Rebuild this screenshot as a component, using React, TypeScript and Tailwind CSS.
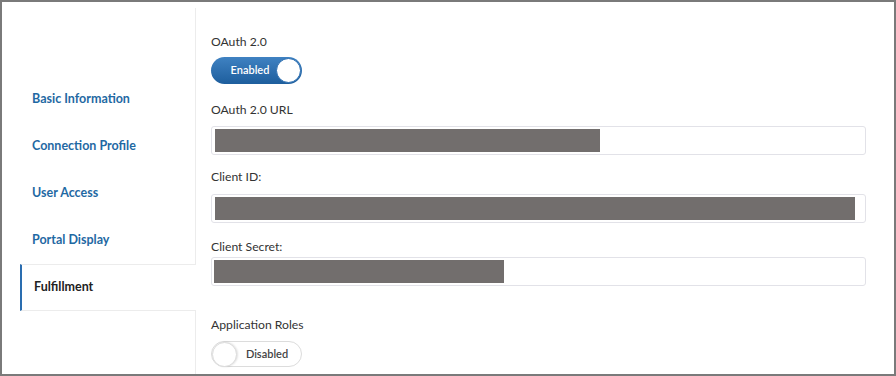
const navItems = [
    "Basic Information",
    "Connection Profile",
    "User Access",
    "Portal Display",
    "Fulfillment",
];

const Field = ({ label, fill, className }: { label: string; fill: number; className: string }) => (
    <div className={className}>
        <div className="text-[12.2px] leading-4 text-[#333]">{label}</div>
        <div className="mt-[8px] h-[29px] rounded-[3px] border border-[#e2e2e8] bg-white p-[2px] pl-[3px]">
            <div className="h-full bg-[#726e6d]" style={{ width: fill }} />
        </div>
    </div>
);

const App = () => {
    return (
        <div className="flex h-[376px] w-[896px] overflow-hidden border-2 border-[#7a7a7a] bg-white font-['Lato',sans-serif]">
            <aside className="w-[194px] shrink-0 pt-[6px]">
                <ul className="h-full border-r border-[#ececec] pl-[18px] pt-[68px]">
                    {navItems.map((item) =>
                        item === "Fulfillment" ? (
                            <li
                                key={item}
                                className="relative -mr-px flex h-[47px] items-center border-y border-l-2 border-y-[#ececec] border-l-[#2a6db0] bg-white pl-[12px] text-[12.5px] font-bold text-[#222]"
                            >
                                {item}
                            </li>
                        ) : (
                            <li key={item} className="flex h-[47px] items-center pl-[12px] text-[12.5px] font-bold text-[#1f69a3]">
                                {item}
                            </li>
                        )
                    )}
                </ul>
            </aside>

            <main className="flex-1 pl-[15px] pr-[28px] pt-[32px]">
                <div className="text-[12.2px] leading-4 text-[#333]">OAuth 2.0</div>
                <div className="mt-[7px] flex h-[27px] w-[91px] items-center rounded-full bg-gradient-to-b from-[#3f82c2] to-[#1d5e9d] p-[1px]">
                    <span className="flex-1 pl-[12px] text-center text-[11px] font-semibold text-white">Enabled</span>
                    <span className="h-[25px] w-[25px] rounded-full border border-[#2a6db0] bg-white" />
                </div>

                <Field label="OAuth 2.0 URL" fill={385} className="mt-[18px]" />

                <div className="mt-[14px]">
                    <div className="text-[12.2px] leading-4 text-[#333]">Client ID:</div>
                    <div className="mt-[9px] h-[29px] rounded-[3px] border border-[#e2e2e8] bg-white p-[2px] pl-[3px]">
                        <div className="h-full w-[640px] bg-[#726e6d]" />
                    </div>
                </div>

                <div className="mt-[16px]">
                    <div className="text-[12.2px] leading-4 text-[#333]">Client Secret:</div>
                    <div className="mt-[2px] h-[29px] rounded-[3px] border border-[#e2e2e8] bg-white p-[2px] pl-[2px]">
                        <div className="h-full w-[290px] bg-[#726e6d]" />
                    </div>
                </div>

                <div className="mt-[31px] text-[12.2px] leading-4 text-[#333]">Application Roles</div>
                <div className="mt-[8px] flex h-[26px] w-[91px] items-center rounded-full border border-[#dcdcdc] bg-white">
                    <span className="h-[25px] w-[25px] rounded-full border border-[#dcdcdc] bg-white shadow-[1px_0_2px_rgba(0,0,0,0.12)]" />
                    <span className="flex-1 pr-[4px] text-center text-[11px] font-semibold text-[#444]">Disabled</span>
                </div>
            </main>
        </div>
    );
};

export default App;
